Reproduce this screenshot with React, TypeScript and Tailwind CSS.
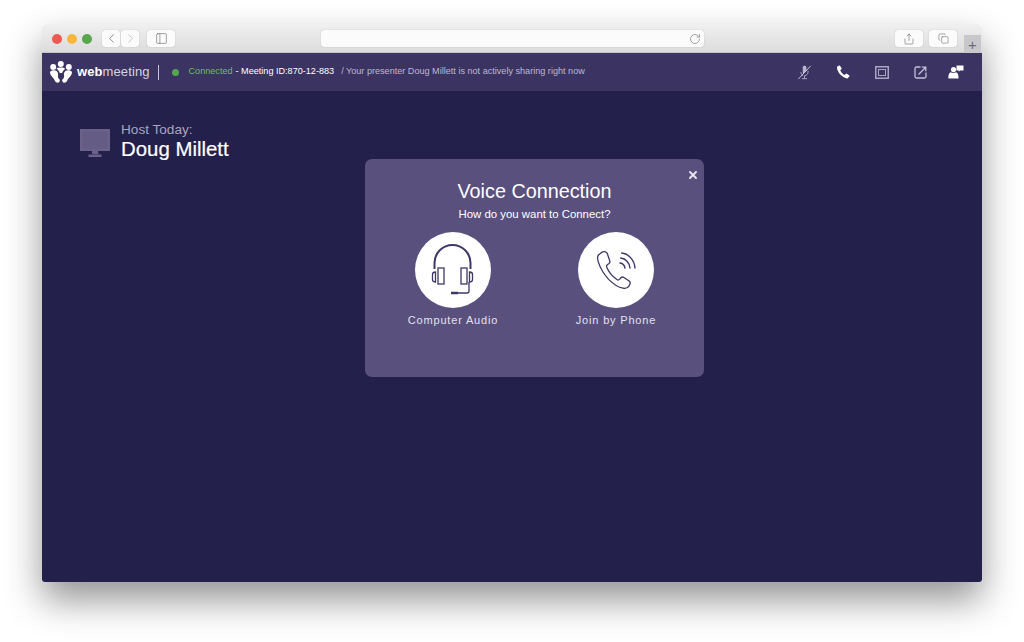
import React from "react";
import { ChevronLeft, ChevronRight, RotateCw, Share, Copy, X, PanelLeft } from "lucide-react";

const Logo = () => (
  <svg width="24" height="22" viewBox="0 0 24 22" fill="#fff">
    <circle cx="11.8" cy="3" r="3" />
    <circle cx="4.2" cy="6" r="3" />
    <circle cx="19.8" cy="6" r="3" />
    <path d="M1 11c1-2 5-2.500 6.500-1 1 1 2 2.500 1.500 4-.5 2 .5 4 2 5l-1 2.500c-2 .5-4-.5-4.500-2.500C5 17 1 15 1 11z" />
    <path d="M23 11c-1-2-5-2.500-6.500-1-1 1-2 2.500-1.500 4 .5 2-.5 4-2 5l1 2.500c2 .5 4-.5 4.500-2.500C19 17 23 15 23 11z" />
    <path d="M7.500 7.500c1-.8 2-1 4.300-1s3.500.3 4.500 1.200c-1 1-2.800 2.300-3.200 4.300h-2.400C10.300 10 8.500 8.500 7.500 7.500z" />
  </svg>
);

const MicOff = () => (
  <svg width="15" height="15" viewBox="0 0 16 17" fill="none">
    <path d="M6 2.500c0-1.500 3-2.500 4-.5l.3 4-3.800 4.500L6 8z" fill="#b9b5cc" />
    <path d="M4 8c0 2 .8 3.500 2.500 4M12 6.500V8c0 2-1.500 4-4 4.300V15M5 15.500h6" stroke="#b9b5cc" strokeWidth="1" />
    <path d="M15 1 1 16" stroke="#d8d6e2" strokeWidth="1" />
  </svg>
);

const PhoneSolid = () => (
  <svg width="14" height="14" viewBox="0 0 14 14" fill="#fff">
    <path d="M3.300.500 1 1.800C.600 6.800 6 13 11.500 13.500l2-2.300c.200-.300.100-.600-.100-.800l-2.600-1.700c-.300-.200-.600-.100-.800.100l-1.200 1.300C6.800 9.200 4.800 7 4.200 5.300L5.500 4c.200-.200.300-.500.100-.800L4 .7C3.800.400 3.500.400 3.300.500z" />
  </svg>
);

const ScreenBox = () => (
  <svg width="14" height="13" viewBox="0 0 14 13" fill="none" stroke="#a9a5c0">
    <rect x="0.750" y="0.750" width="12.500" height="11.500" strokeWidth="1.500" />
    <rect x="3.500" y="3.500" width="7" height="6" strokeWidth="1" />
  </svg>
);

const ExternalBox = () => (
  <svg width="14" height="13" viewBox="0 0 14 13" fill="none" stroke="#c4c1d4" strokeWidth="1.300">
    <path d="M6.500 1H2.500A1.500 1.500 0 0 0 1 2.500v8A1.500 1.500 0 0 0 2.500 12h8a1.500 1.500 0 0 0 1.500-1.500V6.500" />
    <path d="M4.500 8.500 11.500 1.500M7.800 1.200h4v4" />
  </svg>
);

const UsersChat = () => (
  <svg width="16" height="14" viewBox="0 0 16 14" fill="#fff">
    <circle cx="5.500" cy="4.500" r="2.600" />
    <path d="M.500 13.500c-.500-4 1-6 2.500-6.300.8.700 4 .7 5 0 1.500.4 2.800 2.300 2.500 6.300z" />
    <path d="M8.500.500h7v5h-3.500l-1.200 1.200V5.500H8.500z" />
  </svg>
);

const Monitor = () => (
  <svg width="30" height="28" viewBox="0 0 30 28" fill="#6a6189">
    <path d="M0 0h30v22H0z" />
    <path d="M2.500 2.500h25v17h-25z" fill="#655c85" />
    <path d="M12 22h6l.500 3h-6.500zM8.500 25.500h13V28h-13z" />
  </svg>
);

const Headset = () => (
  <svg width="44" height="52" viewBox="0 0 44 52" fill="none" stroke="#3f3767" strokeWidth="1.300">
    <path d="M3.500 25v-6a18 18 0 0 1 36 0v6" strokeWidth="2" />
    <rect x="7" y="24" width="6" height="16" />
    <rect x="30" y="24" width="6" height="16" />
    <path d="M4.500 28C2.800 28 1.500 29 1.500 30.500v5C1.500 37 2.800 38 4.500 38zM38.500 28c1.700 0 3 1 3 2.500v5c0 1.500-1.300 2.500-3 2.500z" />
    <path d="M38 38v9a2 2 0 0 1-2 2H26" />
    <path d="M20 49h7" strokeWidth="2.500" />
  </svg>
);

const PhoneCall = () => (
  <svg width="40" height="41" viewBox="0 0 40 41" fill="none" stroke="#3f3767" strokeWidth="1.400" strokeLinejoin="round" strokeLinecap="round">
    <path
      transform="translate(1 1) scale(0.93)"
      d="M5 1.500 1.800 4C.300 5.500.500 9 1.500 12c2 6.500 6 13 11 18.500 5 5 10 8.500 15.500 9.500 2.500.500 5 0 6.500-2.500l1-2.300c.5-1.200 0-2.300-1-3l-5.500-3.700c-1.200-.8-2.500-.5-3.300.3l-1.500 1.700c-.8.800-1.800.8-2.800.2-4-2.700-9-8.500-11-13.500-.4-1 0-1.800.7-2.400l1.800-1.300c1-.8 1.300-2 .7-3.200L11 2.500C9.800.500 7 0 5 1.500z"
    />
    <path d="M24 13c2.500.3 4.500 2.300 5 5M24.700 8c5 .5 8.800 4.800 9.300 10M25.700 3c7 .6 12.800 7.300 13.300 15" />
  </svg>
);

const ToolbarButton = ({ children, className }: { children: React.ReactNode; className: string }) => (
  <div className={`h-[17px] bg-[#fbfbfb] rounded-[3px] flex items-center justify-center shadow-[0_0_1px_rgba(0,0,0,0.3)] ${className}`}>
    {children}
  </div>
);

const ConnectOption = ({ label, children }: { label: string; children: React.ReactNode }) => (
  <div className="w-[110px] flex flex-col items-center">
    <div className="w-[76px] h-[76px] rounded-full bg-white flex items-center justify-center">{children}</div>
    <span className="mt-[5px] text-[11px] leading-[14px] tracking-[0.82px] text-[#e4e2ec] whitespace-nowrap">{label}</span>
  </div>
);

export default function App() {
  return (
    <div className="w-[1024px] h-[642px] bg-white overflow-hidden pt-[24px] pl-[42px] font-['Liberation_Sans',Arial,sans-serif]">
      <div className="w-[940px] h-[558px] rounded-[4px] flex flex-col shadow-[0_18px_36px_rgba(0,0,0,0.42)]">
        {/* Safari toolbar */}
        <div className="h-[29px] shrink-0 bg-gradient-to-b from-[#f0f0f0] to-[#dcdcdc] rounded-t-[5px] border-b border-[#c4c4c4] flex items-start pl-[10px] pt-[6px]">
          <div className="flex items-center gap-[5px] h-[17px]">
            <span className="w-[10px] h-[10px] rounded-full bg-[#ee5a52]" />
            <span className="w-[10px] h-[10px] rounded-full bg-[#f6b73c]" />
            <span className="w-[10px] h-[10px] rounded-full bg-[#5aa64f]" />
          </div>
          <div className="ml-[10px] flex gap-[1px]">
            <ToolbarButton className="w-[18px]"><ChevronLeft size={15} strokeWidth={1.3} color="#777" /></ToolbarButton>
            <ToolbarButton className="w-[18px]"><ChevronRight size={15} strokeWidth={1.3} color="#bbb" /></ToolbarButton>
          </div>
          <ToolbarButton className="ml-[8px] w-[28px]"><PanelLeft size={13} strokeWidth={1.1} color="#666" /></ToolbarButton>
          <ToolbarButton className="ml-[146px] w-[383px] justify-end pr-[3px]"><RotateCw size={12} strokeWidth={1.3} color="#777" /></ToolbarButton>
          <ToolbarButton className="ml-[191px] w-[28px]"><Share size={12} strokeWidth={1.2} color="#666" /></ToolbarButton>
          <ToolbarButton className="ml-[6px] w-[28px]"><Copy size={11} strokeWidth={1.2} color="#666" /></ToolbarButton>
          <div className="ml-[7px] w-[17px] h-[18px] -mb-[1px] mt-[5px] bg-[#c8c8cc] flex items-center justify-center text-[#6d6a80] text-[15px] leading-none font-light">+</div>
        </div>

        {/* Meeting bar */}
        <div className="h-[38px] shrink-0 bg-[#3b3362] flex items-center pl-[7px]">
          <Logo />
          <span className="ml-[4px] text-[13px] tracking-[0.1px] text-[#d5d3df]">
            <span className="font-bold text-white">web</span>meeting
          </span>
          <span className="ml-[8px] w-px h-[15px] bg-[#c9c6d6]" />
          <span className="ml-[13px] w-[7px] h-[7px] rounded-full bg-[#57a552]" />
          <span className="ml-[10px] text-[9.1px] text-[#6cc04f] whitespace-nowrap">Connected</span>
          <span className="ml-[3px] text-[9.1px] text-white whitespace-nowrap">- Meeting ID:870-12-883</span>
          <span className="ml-[7px] text-[9.1px] text-[#bdb9d0] whitespace-nowrap">/ Your presenter Doug Millett is not actively sharing right now</span>
          <div className="ml-auto flex items-center pr-[10px]">
            <div className="w-[38px] flex justify-center"><MicOff /></div>
            <div className="w-[39px] flex justify-center"><PhoneSolid /></div>
            <div className="w-[39px] flex justify-center"><ScreenBox /></div>
            <div className="w-[39px] flex justify-center"><ExternalBox /></div>
            <div className="w-[32px] flex justify-center"><UsersChat /></div>
          </div>
        </div>

        {/* Body */}
        <div className="relative flex-1 bg-[#23204b] rounded-b-[3px] pl-[38px] pt-[31px]">
          <div className="flex items-start gap-[11px]">
            <div className="mt-[7px]"><Monitor /></div>
            <div className="flex flex-col">
              <span className="text-[13.6px] leading-[15px] text-[#a9a5c0]">Host Today:</span>
              <span className="text-[20.4px] leading-[24px] text-white [-webkit-text-stroke:0.2px_white]">Doug Millett</span>
            </div>
          </div>

          {/* Voice dialog */}
          <div className="absolute left-[323px] top-[68px] w-[339px] h-[218px] rounded-[7px] bg-[#59507e] flex flex-col items-center pt-[20px]">
            <X size={12} strokeWidth={4} color="#e6e4ee" className="absolute right-[5px] top-[10px]" />
            <h2 className="text-[19.8px] leading-[24px] text-white">Voice Connection</h2>
            <p className="mt-[4px] text-[11.4px] leading-[14px] text-white">How do you want to Connect?</p>
            <div className="mt-[11px] flex gap-[53px]">
              <ConnectOption label="Computer Audio"><Headset /></ConnectOption>
              <ConnectOption label="Join by Phone"><PhoneCall /></ConnectOption>
            </div>
          </div>
        </div>
      </div>
    </div>
  );
}
